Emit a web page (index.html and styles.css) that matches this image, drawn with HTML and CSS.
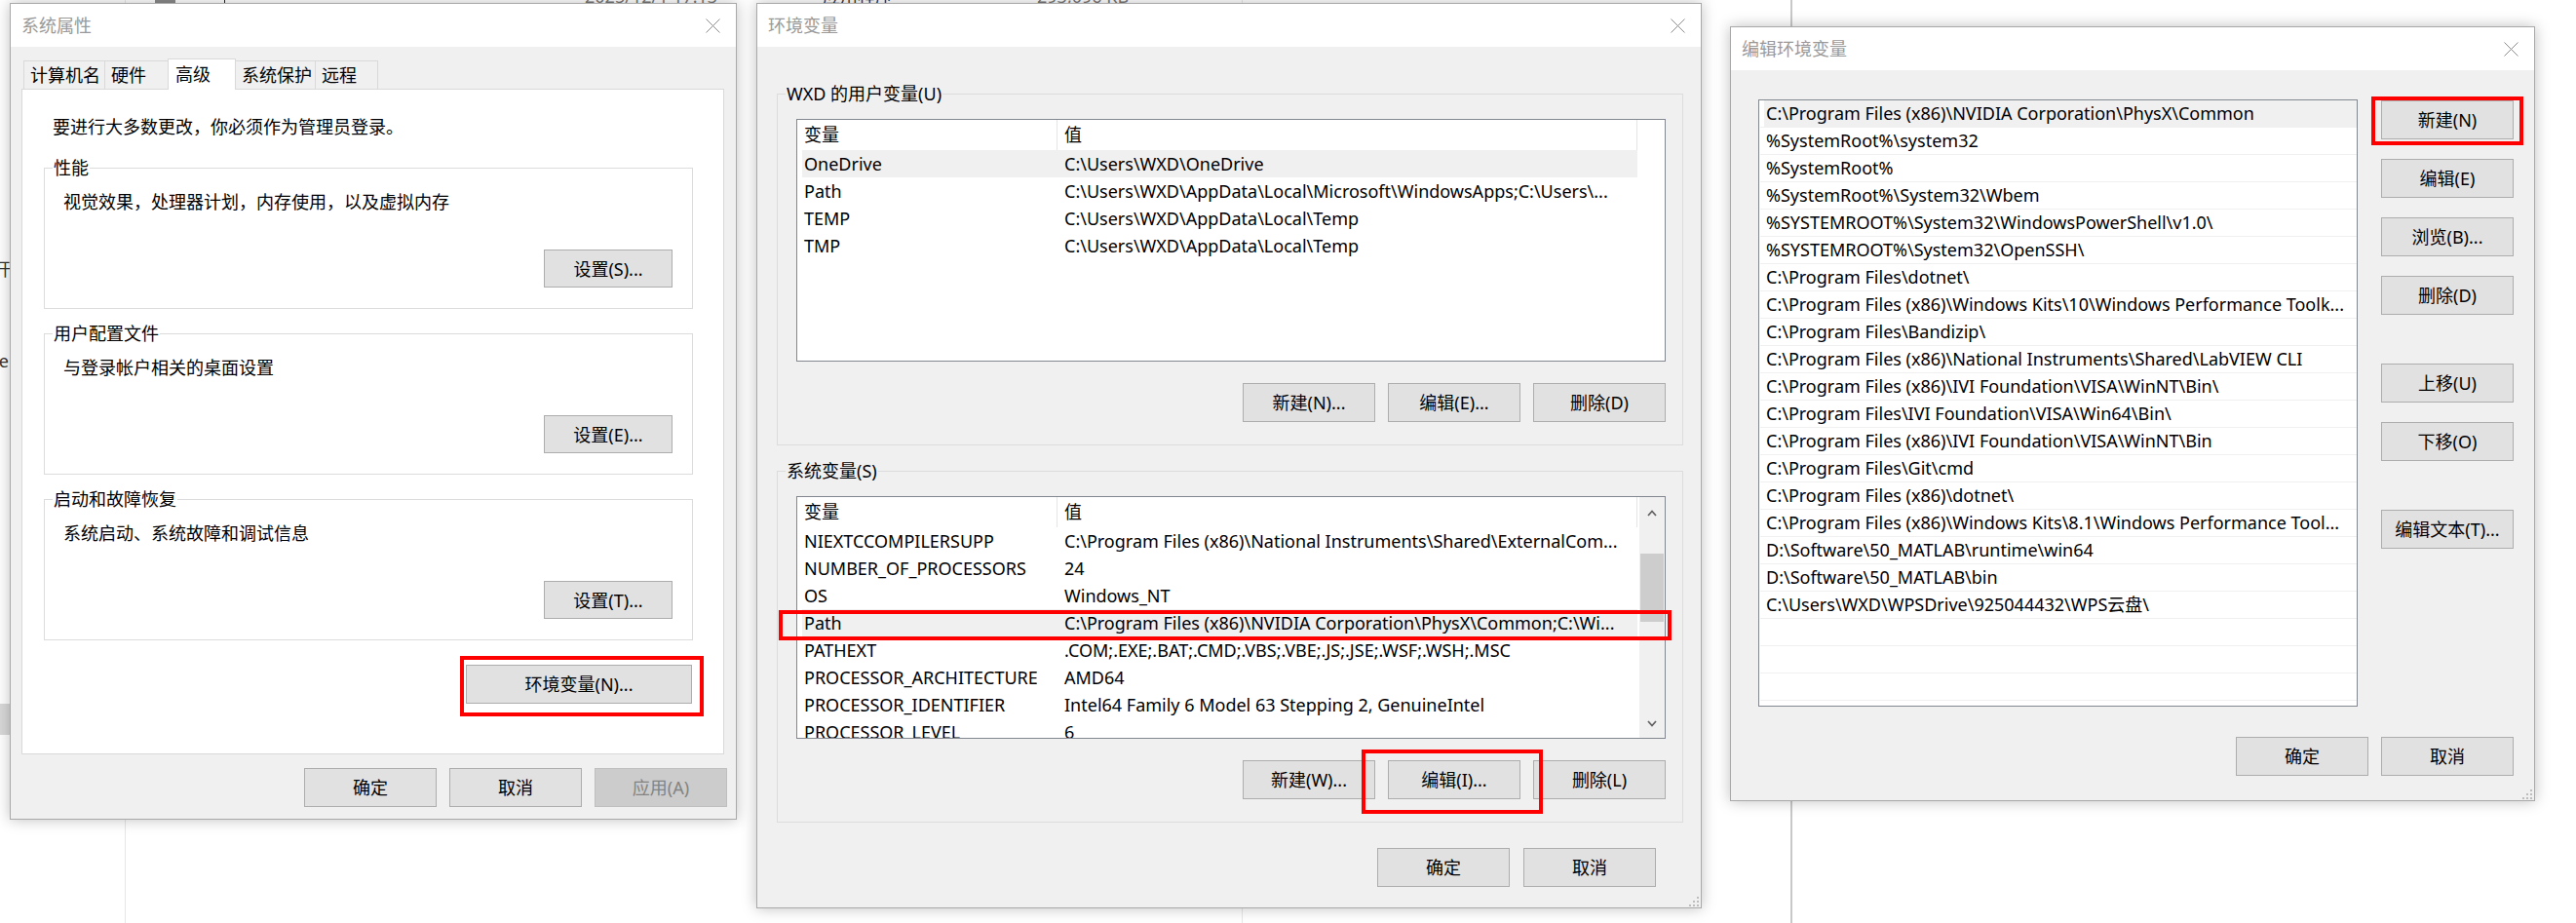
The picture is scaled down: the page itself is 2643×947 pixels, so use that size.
FILE: index.html
```html
<!DOCTYPE html>
<html lang="zh-CN">
<head>
<meta charset="utf-8">
<title>环境变量</title>
<link rel="stylesheet" href="styles.css">
</head>
<body>
<div class="desktop">
  <div class="bg-line bg-line-a"></div>
  <div class="bg-line bg-line-b"></div>
  <div class="bg-line bg-line-c"></div>
  <div class="bg-icon bg-icon-a"></div>
  <div class="bg-icon bg-icon-b"></div>
  <div class="bg-text bg-date">2025/12/1 17:13</div>
  <div class="bg-text bg-app">应用程序</div>
  <div class="bg-text bg-size">293,096 KB</div>
  <div class="bg-text bg-open">打开</div>
  <div class="bg-text bg-users">Users</div>
  <div class="bg-sel"></div>

  <section class="win win-sys">
    <header class="titlebar">
      <span class="title">系统属性</span>
      <svg class="close" viewBox="0 0 15 15"><path d="M.5 .5 14.5 14.5M14.5 .5 .5 14.5"/></svg>
    </header>
    <div class="sys-body">
      <nav class="tabs">
        <div class="tab tab-w1">计算机名</div>
        <div class="tab tab-w2">硬件</div>
        <div class="tab tab-w3 active">高级</div>
        <div class="tab tab-w4">系统保护</div>
        <div class="tab tab-w5">远程</div>
      </nav>
      <div class="tab-panel">
        <p class="notice">要进行大多数更改，你必须作为管理员登录。</p>
        <fieldset class="group sys-group">
          <legend>性能</legend>
          <div class="sys-group-inner">
            <p class="group-desc">视觉效果，处理器计划，内存使用，以及虚拟内存</p>
            <button class="btn btn-set">设置(S)...</button>
          </div>
        </fieldset>
        <fieldset class="group sys-group">
          <legend>用户配置文件</legend>
          <div class="sys-group-inner">
            <p class="group-desc">与登录帐户相关的桌面设置</p>
            <button class="btn btn-set">设置(E)...</button>
          </div>
        </fieldset>
        <fieldset class="group sys-group">
          <legend>启动和故障恢复</legend>
          <div class="sys-group-inner">
            <p class="group-desc">系统启动、系统故障和调试信息</p>
            <button class="btn btn-set">设置(T)...</button>
          </div>
        </fieldset>
        <button class="btn btn-env">环境变量(N)...</button>
      </div>
      <div class="dlg-buttons sys-buttons">
        <button class="btn">确定</button>
        <button class="btn">取消</button>
        <button class="btn disabled">应用(A)</button>
      </div>
    </div>
  </section>

  <section class="win win-env">
    <header class="titlebar">
      <span class="title">环境变量</span>
      <svg class="close" viewBox="0 0 15 15"><path d="M.5 .5 14.5 14.5M14.5 .5 .5 14.5"/></svg>
    </header>
    <div class="env-body">
      <fieldset class="group env-group">
        <legend>WXD 的用户变量(U)</legend>
        <div class="env-group-inner">
          <div class="listview">
            <div class="lv-main">
              <div class="lv-head"><span class="c1">变量</span><span class="c2">值</span></div>
              <div class="lv-row sel"><span class="c1">OneDrive</span><span class="c2">C:\Users\WXD\OneDrive</span></div>
              <div class="lv-row"><span class="c1">Path</span><span class="c2">C:\Users\WXD\AppData\Local\Microsoft\WindowsApps;C:\Users\...</span></div>
              <div class="lv-row"><span class="c1">TEMP</span><span class="c2">C:\Users\WXD\AppData\Local\Temp</span></div>
              <div class="lv-row"><span class="c1">TMP</span><span class="c2">C:\Users\WXD\AppData\Local\Temp</span></div>
            </div>
          </div>
          <div class="btn-row">
            <button class="btn">新建(N)...</button>
            <button class="btn">编辑(E)...</button>
            <button class="btn">删除(D)</button>
          </div>
        </div>
      </fieldset>
      <fieldset class="group env-group env-group-sys">
        <legend>系统变量(S)</legend>
        <div class="env-group-inner">
          <div class="listview">
            <div class="lv-main">
              <div class="lv-head"><span class="c1">变量</span><span class="c2">值</span></div>
              <div class="lv-row"><span class="c1">NIEXTCCOMPILERSUPP</span><span class="c2">C:\Program Files (x86)\National Instruments\Shared\ExternalCom...</span></div>
              <div class="lv-row"><span class="c1">NUMBER_OF_PROCESSORS</span><span class="c2">24</span></div>
              <div class="lv-row"><span class="c1">OS</span><span class="c2">Windows_NT</span></div>
              <div class="lv-row sel"><span class="c1">Path</span><span class="c2">C:\Program Files (x86)\NVIDIA Corporation\PhysX\Common;C:\Wi...</span></div>
              <div class="lv-row"><span class="c1">PATHEXT</span><span class="c2">.COM;.EXE;.BAT;.CMD;.VBS;.VBE;.JS;.JSE;.WSF;.WSH;.MSC</span></div>
              <div class="lv-row"><span class="c1">PROCESSOR_ARCHITECTURE</span><span class="c2">AMD64</span></div>
              <div class="lv-row"><span class="c1">PROCESSOR_IDENTIFIER</span><span class="c2">Intel64 Family 6 Model 63 Stepping 2, GenuineIntel</span></div>
              <div class="lv-row"><span class="c1">PROCESSOR_LEVEL</span><span class="c2">6</span></div>
            </div>
            <div class="scrollbar">
              <svg class="sb-arrow" viewBox="0 0 10 7"><path d="M1 6 5 1.5 9 6"/></svg>
              <div class="sb-thumb"></div>
              <svg class="sb-arrow sb-down" viewBox="0 0 10 7"><path d="M1 1 5 5.5 9 1"/></svg>
            </div>
          </div>
          <div class="btn-row">
            <button class="btn">新建(W)...</button>
            <button class="btn">编辑(I)...</button>
            <button class="btn">删除(L)</button>
          </div>
        </div>
      </fieldset>
      <div class="dlg-buttons env-buttons">
        <button class="btn">确定</button>
        <button class="btn">取消</button>
      </div>
    </div>
    <svg class="grip" viewBox="0 0 11 11"><g><rect x="9" y="1" width="2" height="2"/><rect x="5" y="5" width="2" height="2"/><rect x="9" y="5" width="2" height="2"/><rect x="1" y="9" width="2" height="2"/><rect x="5" y="9" width="2" height="2"/><rect x="9" y="9" width="2" height="2"/></g></svg>
  </section>

  <section class="win win-edit">
    <header class="titlebar">
      <span class="title">编辑环境变量</span>
      <svg class="close" viewBox="0 0 15 15"><path d="M.5 .5 14.5 14.5M14.5 .5 .5 14.5"/></svg>
    </header>
    <div class="edit-body">
      <div class="edit-main">
        <div class="path-list">
          <div class="path-row sel">C:\Program Files (x86)\NVIDIA Corporation\PhysX\Common</div>
          <div class="path-row">%SystemRoot%\system32</div>
          <div class="path-row">%SystemRoot%</div>
          <div class="path-row">%SystemRoot%\System32\Wbem</div>
          <div class="path-row">%SYSTEMROOT%\System32\WindowsPowerShell\v1.0\</div>
          <div class="path-row">%SYSTEMROOT%\System32\OpenSSH\</div>
          <div class="path-row">C:\Program Files\dotnet\</div>
          <div class="path-row">C:\Program Files (x86)\Windows Kits\10\Windows Performance Toolk...</div>
          <div class="path-row">C:\Program Files\Bandizip\</div>
          <div class="path-row">C:\Program Files (x86)\National Instruments\Shared\LabVIEW CLI</div>
          <div class="path-row">C:\Program Files (x86)\IVI Foundation\VISA\WinNT\Bin\</div>
          <div class="path-row">C:\Program Files\IVI Foundation\VISA\Win64\Bin\</div>
          <div class="path-row">C:\Program Files (x86)\IVI Foundation\VISA\WinNT\Bin</div>
          <div class="path-row">C:\Program Files\Git\cmd</div>
          <div class="path-row">C:\Program Files (x86)\dotnet\</div>
          <div class="path-row">C:\Program Files (x86)\Windows Kits\8.1\Windows Performance Tool...</div>
          <div class="path-row">D:\Software\50_MATLAB\runtime\win64</div>
          <div class="path-row">D:\Software\50_MATLAB\bin</div>
          <div class="path-row">C:\Users\WXD\WPSDrive\925044432\WPS云盘\</div>
          <div class="path-row"></div>
          <div class="path-row"></div>
          <div class="path-row"></div>
        </div>
        <div class="side-btns">
          <button class="btn">新建(N)</button>
          <button class="btn">编辑(E)</button>
          <button class="btn">浏览(B)...</button>
          <button class="btn">删除(D)</button>
          <button class="btn gap-big">上移(U)</button>
          <button class="btn">下移(O)</button>
          <button class="btn gap-big">编辑文本(T)...</button>
        </div>
      </div>
      <div class="dlg-buttons edit-buttons">
        <button class="btn">确定</button>
        <button class="btn">取消</button>
      </div>
    </div>
    <svg class="grip" viewBox="0 0 11 11"><g><rect x="9" y="1" width="2" height="2"/><rect x="5" y="5" width="2" height="2"/><rect x="9" y="5" width="2" height="2"/><rect x="1" y="9" width="2" height="2"/><rect x="5" y="9" width="2" height="2"/><rect x="9" y="9" width="2" height="2"/></g></svg>
  </section>

  <div class="mark mark-env"></div>
  <div class="mark mark-path"></div>
  <div class="mark mark-edit"></div>
  <div class="mark mark-new"></div>
</div>
</body>
</html>
```
FILE: styles.css
```css
* { box-sizing: border-box; }
html, body { margin: 0; padding: 0; }
body {
  width: 2643px;
  height: 947px;
  overflow: hidden;
  background: #fff;
  font-family: "Noto Sans", "Noto Sans CJK SC", sans-serif;
  font-size: 18px;
  color: #000;
}
p { margin: 0; }

.desktop { position: relative; width: 2643px; height: 947px; overflow: hidden; background: #fff; }

/* background desktop remnants */
.bg-line { position: absolute; top: 0; height: 947px; width: 1px; background: #e6e6e6; }
.bg-line-a { left: 128px; }
.bg-line-b { left: 1274px; }
.bg-line-c { left: 1837px; width: 2px; background: #c8c8c8; }
.bg-icon { position: absolute; top: 0; height: 3px; }
.bg-icon-a { left: 159px; width: 21px; background: #8a8a8a; }
.bg-icon-b { left: 230px; width: 1px; background: #222; }
.bg-text { position: absolute; line-height: 24px; white-space: nowrap; color: #333; }
.bg-date { left: 600px; top: -16px; color: #777; }
.bg-app { left: 844px; top: -16px; }
.bg-size { left: 1064px; top: -16px; color: #777; }
.bg-open { left: -25px; top: 264px; }
.bg-users { left: -23px; top: 358px; }
.bg-sel { position: absolute; left: 0; top: 722px; width: 12px; height: 32px; background: #d9d9d9; }

/* windows */
.win {
  position: absolute;
  display: flex;
  flex-direction: column;
  background: #f0f0f0;
  border: 1px solid #a9a9a9;
  box-shadow: 0 0 14px rgba(0, 0, 0, 0.25);
  z-index: 2;
}
.win-sys { left: 10px; top: 3px; width: 746px; height: 838px; }
.win-env { left: 776px; top: 3px; width: 970px; height: 929px; }
.win-edit { left: 1775px; top: 27px; width: 826px; height: 795px; }

.titlebar {
  flex: none;
  height: 44px;
  background: #fff;
  display: flex;
  align-items: center;
  justify-content: space-between;
  padding: 0 16px 0 11px;
}
.title { color: #999; line-height: 24px; }
.close { width: 15px; height: 15px; }
.close path { stroke: #8a8a8a; stroke-width: 1; fill: none; }

.grip { position: absolute; right: 2px; bottom: 1px; width: 11px; height: 11px; }
.grip rect { fill: #bdbdbd; }

/* buttons */
.btn {
  font-family: inherit;
  font-size: 18px;
  width: 136px;
  height: 40px;
  margin: 0;
  padding: 0;
  line-height: 38px;
  text-align: center;
  background: #e1e1e1;
  border: 1px solid #adadad;
  border-radius: 0;
  color: #000;
  white-space: nowrap;
}
.btn.disabled { background: #cccccc; border-color: #bfbfbf; color: #838383; }
.dlg-buttons { display: flex; justify-content: flex-end; gap: 13px; flex: none; }

/* group boxes */
.group { margin: 0; padding: 0; border: 1px solid #dcdcdc; min-width: 0; }
.group legend { margin-left: 8px; padding: 0 1px; line-height: 24px; }

/* system properties */
.sys-body { flex: 1; display: flex; flex-direction: column; padding: 14px 12px 0 11px; }
.tabs { display: flex; align-items: flex-start; height: 29px; margin-left: 2px; position: relative; z-index: 1; flex: none; }
.tab {
  height: 29px;
  border: 1px solid #d9d9d9;
  border-bottom: none;
  background: #f0f0f0;
  padding-left: 6px;
  line-height: 28px;
  white-space: nowrap;
}
.tab + .tab { margin-left: -1px; }
.tab-w1 { width: 84px; }
.tab-w2 { width: 66px; }
.tab-w3 { width: 70px; }
.tab-w4 { width: 83px; }
.tab-w5 { width: 65px; }
.tab.active { height: 32px; margin-top: -2px; background: #fff; padding-left: 7px; line-height: 30px; position: relative; z-index: 2; }
.tab-panel {
  flex: none;
  height: 683px;
  background: #fff;
  border: 1px solid #d9d9d9;
  padding: 26px 31px 0 22px;
  display: flex;
  flex-direction: column;
}
.notice { line-height: 24px; margin-left: 9px; }
.sys-group { margin-top: 13px; }
.sys-group:first-of-type { margin-top: 18px; }
.sys-group-inner { display: flex; flex-direction: column; padding: 11px 20px 21px 19px; }
.group-desc { line-height: 24px; align-self: flex-start; }
.btn-set { width: 132px; height: 39px; margin-top: 37px; align-self: flex-end; }
.btn-env { width: 232px; margin-top: 25px; align-self: flex-end; margin-right: 1px; }
.sys-buttons { margin-top: 14px; margin-right: -3px; }

/* environment variables */
.env-body { flex: 1; display: flex; flex-direction: column; padding: 36px 18px 0 20px; }
.env-group-sys { margin-top: 14px; }
.env-group-inner { display: flex; flex-direction: column; padding: 14px 17px 23px 19px; }
.listview { height: 249px; border: 1px solid #828790; background: #fff; display: flex; overflow: hidden; }
.lv-main { flex: 1; min-width: 0; overflow: hidden; }
.lv-head, .lv-row { display: flex; margin-left: 5px; width: 857px; white-space: nowrap; }
.lv-head { height: 31px; line-height: 31px; }
.lv-row { height: 28px; line-height: 28px; }
.c1 { width: 262px; padding-left: 2px; overflow: hidden; flex: none; }
.c2 { width: 595px; padding-left: 7px; overflow: hidden; flex: none; }
.lv-head .c1, .lv-head .c2 { border-right: 1px solid #e5e5e5; }
.lv-row.sel { background: #f0f0f0; }
.btn-row { display: flex; justify-content: flex-end; gap: 13px; margin-top: 22px; }
.env-buttons { margin-top: 26px; margin-right: 28px; gap: 14px; }

.scrollbar { flex: none; width: 26px; background: #f0f0f0; display: flex; flex-direction: column; align-items: center; }
.sb-arrow { width: 10px; height: 7px; margin-top: 13px; flex: none; }
.sb-arrow path { stroke: #606060; stroke-width: 1.7; fill: none; }
.sb-thumb { width: 24px; height: 70px; margin-top: 38px; background: #cdcdcd; flex: none; }
.sb-down { margin-top: auto; margin-bottom: 11px; }

/* edit environment variable */
.edit-body { flex: 1; display: flex; flex-direction: column; padding: 30px 21px 0 28px; }
.edit-main { display: flex; gap: 24px; }
.path-list { flex: none; width: 615px; height: 623px; border: 1px solid #828790; background: #fff; overflow: hidden; }
.path-row {
  height: 28px;
  line-height: 27px;
  margin-left: 1px;
  padding-left: 6px;
  border-bottom: 1px solid #f0f0f0;
  white-space: nowrap;
  overflow: hidden;
}
.path-row.sel { background: linear-gradient(to right, transparent 4px, #f0f0f0 4px); border-bottom-color: #f0f0f0; }
.side-btns { display: flex; flex-direction: column; gap: 20px; padding-top: 1px; }
.side-btns .gap-big { margin-top: 30px; }
.edit-buttons { margin-top: 31px; }

/* red annotation boxes */
.mark { position: absolute; border: 4px solid #f00; z-index: 5; }
.mark-env { left: 472px; top: 673px; width: 250px; height: 62px; }
.mark-path { left: 799px; top: 626px; width: 916px; height: 31px; }
.mark-edit { left: 1397px; top: 769px; width: 186px; height: 66px; }
.mark-new { left: 2433px; top: 99px; width: 156px; height: 50px; }
```
